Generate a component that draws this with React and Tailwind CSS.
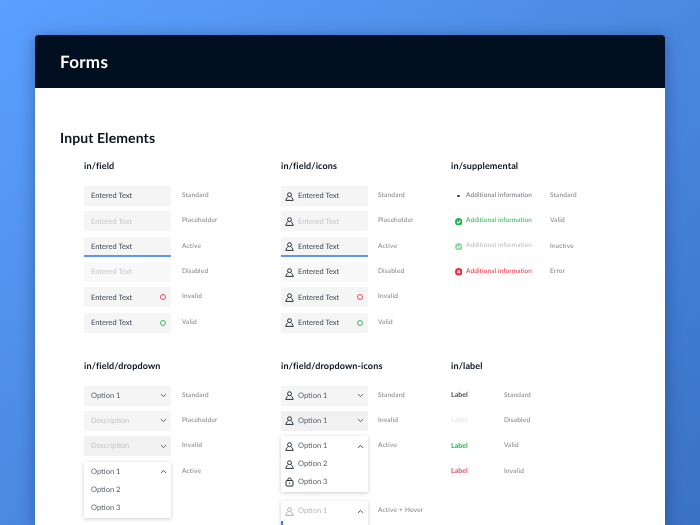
import React from "react";
import { ChevronDown, ChevronUp } from "lucide-react";

const font = { fontFamily: "Lato, sans-serif" };

function UserIcon({ className = "text-[#1f2a3a]" }) {
  return (
    <svg viewBox="0 0 12 12" className={`w-[9px] h-[9px] shrink-0 ${className}`} fill="none" stroke="currentColor" strokeWidth="1.3">
      <circle cx="6" cy="3.6" r="2.6" />
      <path d="M4.2 6 C3 7.4 1.6 8.6 1 11.2 H11 C10.4 8.6 9 7.4 7.8 6" />
    </svg>
  );
}

function LockIcon() {
  return (
    <svg viewBox="0 0 12 12" className="w-[9px] h-[10px] shrink-0 text-[#1f2a3a]" fill="none" stroke="currentColor" strokeWidth="1.3">
      <path d="M3.8 4 V2.8 a2.2 2.2 0 0 1 4.4 0 V4" />
      <rect x="1.4" y="4" width="9.2" height="7.4" rx="1" />
      <circle cx="6" cy="7.6" r="0.9" fill="currentColor" stroke="none" />
    </svg>
  );
}

function Ring({ color }) {
  return <span className={`ml-auto w-[6px] h-[6px] rounded-full border-[1.3px] ${color}`} />;
}

function Field({ text = "Entered Text", muted, active, disabled, status, icon, iconMuted }) {
  return (
    <div className={`relative h-[20px] w-[87px] shrink-0 rounded-[1px] flex items-center ${icon ? "pl-[4px]" : "pl-[7px]"} pr-[5px] ${disabled ? "bg-[#f9f9f9]" : "bg-[#f5f5f5]"}`}>
      {icon && (
        <span className="mr-[4px] flex">
          <UserIcon className={iconMuted ? "text-[#a9adb3]" : undefined} />
        </span>
      )}
      <span className={`text-[7.5px] leading-none ${muted ? "text-[#c4c6c9]" : "text-[#3a4250]"}`}>{text}</span>
      {status === "invalid" && <Ring color="border-[#ee4a5a]" />}
      {status === "valid" && <Ring color="border-[#35bd5c]" />}
      {active && <span className="absolute left-0 right-0 bottom-0 h-[1.5px] bg-[#5b98ea]" />}
    </div>
  );
}

function State({ children }) {
  return <span className="block text-[6.5px] leading-[10px] tracking-[0.2px] text-[#7b7f85]">{children}</span>;
}

function Row({ children, label, gap = "ml-[11px]" }) {
  return (
    <div className="flex items-center h-[20px] mb-[5.35px]">
      {children}
      <span className={gap}>
        <State>{label}</State>
      </span>
    </div>
  );
}

function Title({ children, className = "" }) {
  return <h3 className={`text-[9px] font-bold tracking-[0.15px] text-[#0b1420] leading-[12px] ${className}`}>{children}</h3>;
}

function Select({ text, muted, darker, icon, iconMuted }) {
  return (
    <div className={`h-[20px] w-[87px] shrink-0 rounded-[1px] flex items-center ${icon ? "pl-[4px]" : "pl-[7px]"} pr-[3.5px] ${darker ? "bg-[#f1f1f1]" : "bg-[#f5f5f5]"}`}>
      {icon && (
        <span className="mr-[4px] flex">
          <UserIcon className={iconMuted ? "text-[#a9adb3]" : undefined} />
        </span>
      )}
      <span className={`text-[7.5px] leading-none ${muted ? "text-[#c4c6c9]" : "text-[#565c66]"}`}>{text}</span>
      <ChevronDown className="ml-auto w-[9px] h-[9px] text-[#3a4250]" strokeWidth={2.2} />
    </div>
  );
}

function MenuItem({ icon, children, open, muted }) {
  return (
    <div className={`h-[18px] flex items-center ${icon ? "pl-[4px]" : "pl-[7px]"} pr-[3.5px]`}>
      {icon && <span className="mr-[4px] flex">{icon}</span>}
      <span className={`text-[7.5px] leading-none ${muted ? "text-[#b4b7bb]" : "text-[#565c66]"}`}>{children}</span>
      {open && <ChevronUp className="ml-auto w-[9px] h-[9px] text-[#1f2a3a]" strokeWidth={2.2} />}
    </div>
  );
}

function Menu({ children, className = "" }) {
  return <div className={`w-[87px] shrink-0 py-[1px] bg-white rounded-[1px] shadow-[0_1px_4px_rgba(0,0,0,0.2)] ${className}`}>{children}</div>;
}

function Supplemental({ icon, text, color, label }) {
  return (
    <div className="flex items-center h-[20px] mb-[5.35px]">
      <span className="w-[15px] flex justify-center">{icon}</span>
      <span className={`text-[6.5px] leading-none tracking-[0.1px] w-[84px] ${color}`}>{text}</span>
      <State>{label}</State>
    </div>
  );
}

function Badge({ bg, cross }) {
  return (
    <svg viewBox="0 0 8 8" className="w-[7.5px] h-[7.5px]">
      <circle cx="4" cy="4" r="4" fill={bg} />
      {cross ? (
        <path d="M2.6 2.6 L5.4 5.4 M5.4 2.6 L2.6 5.4" stroke="#fff" strokeWidth="1.1" />
      ) : (
        <path d="M2.2 4 L3.6 5.3 L5.9 2.8" stroke="#fff" strokeWidth="1.1" fill="none" />
      )}
    </svg>
  );
}

function LabelRow({ text, color, label }) {
  return (
    <div className="flex items-center h-[20px] mb-[5.35px]">
      <span className={`text-[7px] leading-none font-bold w-[53px] ${color}`}>{text}</span>
      <State>{label}</State>
    </div>
  );
}

export default function App() {
  return (
    <div
      className="h-[525px] w-[700px] overflow-hidden bg-gradient-to-br from-[#5ba0ff] to-[#3a72c4] pt-[35px] px-[35px] [text-rendering:geometricPrecision]"
      style={font}
    >
      <div className="h-[490px] bg-white rounded-t-[3px] shadow-[0_2px_16px_rgba(0,20,60,0.35)] overflow-hidden [will-change:transform]">
        <header className="h-[53px] bg-[#020f20] pl-[25px] flex items-center">
          <h1 className="text-[17px] font-bold text-white tracking-[0.3px]">Forms</h1>
        </header>

        <div className="pl-[25px] pt-[41px]">
          <h2 className="text-[14px] font-bold text-[#0b1420] leading-[18px] tracking-[0.1px]">Input Elements</h2>

          <div className="pl-[24px] pt-[13px] grid grid-cols-[197px_170px_1fr]">
            {/* top row */}
            <div className="h-[200px]">
              <Title className="mb-[14px]">in/field</Title>
              <Row label="Standard"><Field /></Row>
              <Row label="Placeholder"><Field muted /></Row>
              <Row label="Active"><Field active /></Row>
              <Row label="Disabled"><Field muted disabled /></Row>
              <Row label="Invalid"><Field status="invalid" /></Row>
              <Row label="Valid"><Field status="valid" /></Row>
            </div>
            <div>
              <Title className="mb-[14px]">in/field/icons</Title>
              <Row label="Standard" gap="ml-[10px]"><Field icon /></Row>
              <Row label="Placeholder" gap="ml-[10px]"><Field icon muted /></Row>
              <Row label="Active" gap="ml-[10px]"><Field icon active /></Row>
              <Row label="Disabled" gap="ml-[10px]"><Field icon disabled /></Row>
              <Row label="Invalid" gap="ml-[10px]"><Field icon status="invalid" /></Row>
              <Row label="Valid" gap="ml-[10px]"><Field icon status="valid" /></Row>
            </div>
            <div>
              <Title className="mb-[14px]">in/supplemental</Title>
              <Supplemental
                icon={<span className="w-[2.5px] h-[2.5px] rounded-full bg-[#3a4250]" />}
                text="Additional information"
                color="text-[#6d7178]"
                label="Standard"
              />
              <Supplemental icon={<Badge bg="#22b84c" />} text="Additional information" color="text-[#22b84c]" label="Valid" />
              <Supplemental icon={<Badge bg="#8fdca6" />} text="Additional information" color="text-[#b9bcc0]" label="Inactive" />
              <Supplemental icon={<Badge bg="#ee2a3f" cross />} text="Additional information" color="text-[#ee2a3f]" label="Error" />
            </div>

            {/* bottom row */}
            <div>
              <Title className="mb-[13.5px]">in/field/dropdown</Title>
              <Row label="Standard"><Select text="Option 1" /></Row>
              <Row label="Placeholder"><Select text="Description" muted /></Row>
              <Row label="Invalid"><Select text="Description" muted darker /></Row>
              <div className="flex items-start">
                <Menu>
                  <MenuItem open>Option 1</MenuItem>
                  <MenuItem>Option 2</MenuItem>
                  <MenuItem>Option 3</MenuItem>
                </Menu>
                <span className="ml-[11px] mt-[5px]"><State>Active</State></span>
              </div>
            </div>
            <div>
              <Title className="mb-[13.5px]">in/field/dropdown-icons</Title>
              <Row label="Standard" gap="ml-[10px]"><Select text="Option 1" icon /></Row>
              <Row label="Invalid" gap="ml-[10px]"><Select text="Option 1" icon darker /></Row>
              <div className="flex items-start">
                <Menu>
                  <MenuItem open icon={<UserIcon />}>Option 1</MenuItem>
                  <MenuItem icon={<UserIcon />}>Option 2</MenuItem>
                  <MenuItem icon={<LockIcon />}>Option 3</MenuItem>
                </Menu>
                <span className="ml-[10px] mt-[5px]"><State>Active</State></span>
              </div>
              <div className="flex items-start mt-[9px]">
                <Menu className="relative h-[40px]">
                  <MenuItem open muted icon={<UserIcon className="text-[#a9adb3]" />}>Option 1</MenuItem>
                  <span className="absolute left-0 top-[20px] w-[1.5px] h-[8px] bg-[#2f7de8]" />
                </Menu>
                <span className="ml-[10px] mt-[5px]"><State>Active + Hover</State></span>
              </div>
            </div>
            <div>
              <Title className="mb-[13.5px]">in/label</Title>
              <LabelRow text="Label" color="text-[#4a4f57]" label="Standard" />
              <LabelRow text="Label" color="text-[#e6e7e9]" label="Disabled" />
              <LabelRow text="Label" color="text-[#22b84c]" label="Valid" />
              <LabelRow text="Label" color="text-[#f0505f]" label="Invalid" />
            </div>
          </div>
        </div>
      </div>
    </div>
  );
}
